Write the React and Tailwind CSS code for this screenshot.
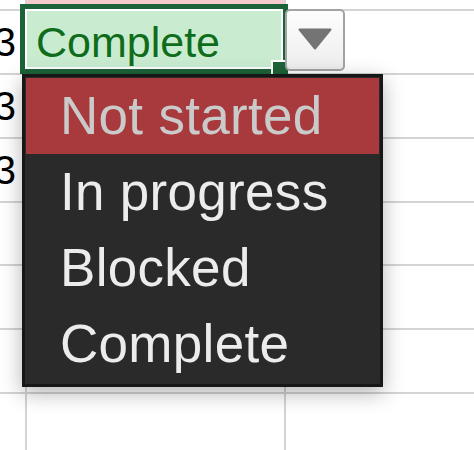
import React from "react";

const ROW_HEIGHTS = [11, 64, 64, 64, 63, 64, 64, 64];
const LEFT_VALUES = { 1: "3", 2: "3", 3: "3" };
const OPTIONS = ["Not started", "In progress", "Blocked", "Complete"];

function GridRow({ index, height }) {
  return (
    <div
      className="flex shrink-0 border-b-2 border-[#d4d4d4]"
      style={{ height }}
    >
      <div className="w-[27px] shrink-0 border-r-2 border-[#d4d4d4] flex items-center justify-end pr-[9px] overflow-hidden text-[40px] leading-none text-black">
        {LEFT_VALUES[index] ?? ""}
      </div>
      <div
        className={
          index === 0
            ? "w-[259px] shrink-0 border-r-2 border-[#d4d4d4] bg-[#f6cbcd]"
            : "w-[259px] shrink-0 border-r-2 border-[#d4d4d4]"
        }
      />
      <div className="flex-1" />
    </div>
  );
}

function DropdownButton() {
  return (
    <div className="absolute left-[285px] top-[9px] w-[60px] h-[62px] rounded-[5px] border-2 border-[#a3a3a3] bg-gradient-to-b from-[#fdfdfd] to-[#eeeeee] flex items-center justify-center">
      <svg width="34" height="22" viewBox="0 0 34 22" className="mb-[2px]">
        <path d="M1.5 1.5 H32.5 L17 20.5 Z" fill="#747474" stroke="#747474" strokeWidth="2" strokeLinejoin="round" />
      </svg>
    </div>
  );
}

function SelectedCell() {
  return (
    <>
      <div className="absolute left-[20px] top-[4px] w-[268px] h-[70px] border-[5px] border-[#1d6339] bg-white p-[2px]">
        <div className="h-full bg-[#c9ecd1] flex items-center pl-[9px] pt-[7px] text-[43px] leading-none text-[#0f6c1a]">
          Complete
        </div>
      </div>
      {/* fill handle */}
      <div className="absolute left-[271px] top-[60px] w-[16px] h-[14px] bg-[#1d6339] border-l-2 border-t-2 border-white" />
    </>
  );
}

function OptionsMenu() {
  return (
    <div className="absolute left-[22px] top-[74px] w-[361px] h-[313px] border-[3px] border-[#171717] bg-[#2a2a2a] p-[1px] shadow-[0_6px_20px_rgba(0,0,0,0.3)]">
      {OPTIONS.map((label, i) => (
        <div
          key={label}
          className={
            i === 0
              ? "h-[76px] pl-[34px] text-[53px] leading-[76px] tracking-[0.3px] bg-[#a8393c] text-[#cacaca]"
              : "h-[76px] pl-[34px] text-[53px] leading-[76px] tracking-[0.3px] text-[#ececec]"
          }
        >
          {label}
        </div>
      ))}
    </div>
  );
}

export default function App() {
  return (
    <div className="relative w-[474px] h-[450px] overflow-hidden bg-white font-['Liberation_Sans',Arial,Helvetica,sans-serif]">
      <div className="flex flex-col">
        {ROW_HEIGHTS.map((h, i) => (
          <GridRow key={i} index={i} height={h} />
        ))}
      </div>
      <SelectedCell />
      <DropdownButton />
      <OptionsMenu />
    </div>
  );
}
